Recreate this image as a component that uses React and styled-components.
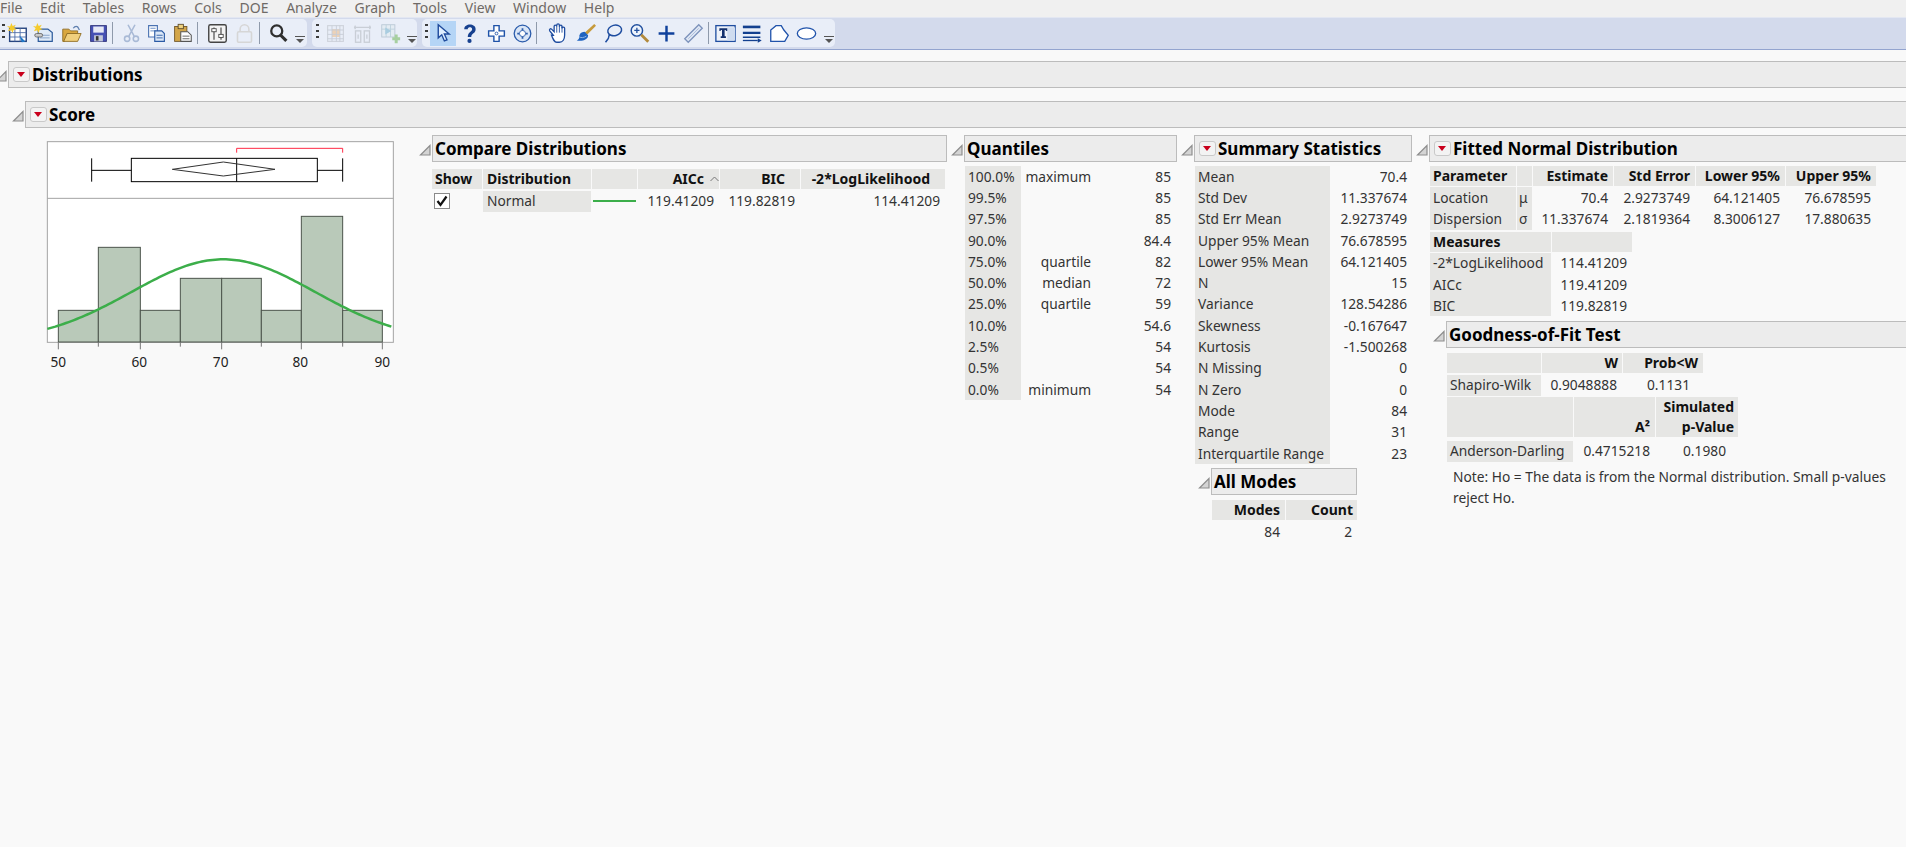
import React from 'react'
import styled, { createGlobalStyle } from 'styled-components'

const GlobalStyle = createGlobalStyle`
  html, body { margin: 0; padding: 0; background: #f9f9f9; }
  body { font-family: "Noto Sans", "Open Sans", sans-serif; overflow: hidden; }
`

const Page = styled.div`
  width: 1906px;
  height: 847px;
  overflow: hidden;
  background: #f9f9f9;
  color: #2b2b2b;
  font-size: 13.75px;
`

/* menu + toolbar */
const MenuBar = styled.div`
  display: flex;
  height: 17px;
  background: #f0f0f0;
  gap: 17.7px;
  font-size: 14px;
  line-height: 15px;
  color: #6f6a66;
`
const ToolBand = styled.div`
  display: flex;
  height: 33px;
  box-sizing: border-box;
  padding: 1px 0 2px;
  gap: 5px;
  background: #d3daec;
  border-top: 1px solid #e3e7f2;
  border-bottom: 1px solid #93a4cf;
`
const ToolGroup = styled.div`
  display: flex;
  align-items: center;
  width: ${p => p.$w}px;
  box-sizing: border-box;
  padding-left: ${p => p.$pad || 0}px;
  background: #e9eef8;
  border-radius: ${p => (p.$first ? '0 5px 5px 0' : '5px')};
`
const Gripper = styled.span`
  width: 3px;
  height: 18px;
  margin-right: ${p => p.$after || 0}px;
  background: repeating-linear-gradient(#3b3b3b 0 2px, transparent 2px 6px);
`
const ToolBtn = styled.span`
  display: flex;
  flex: none;
  align-items: center;
  justify-content: center;
  width: ${p => p.$w || 27}px;
  height: 25px;
  background: ${p => (p.$active ? '#b5d5f6' : 'transparent')};
  svg { width: 21px; height: 21px; display: block; }
`
const ToolSep = styled.span`
  flex: none;
  width: 1px;
  height: 22px;
  margin: 0 ${p => p.$r || 5}px 0 1px;
  background: #8f9aab;
`
const Overflow = styled.span`
  flex: none;
  width: 10px;
  height: 8px;
  margin: 14px 0 0 ${p => p.$l || 0}px;
  border-top: 1px solid #555;
  position: relative;
  &::after {
    content: '';
    position: absolute;
    left: 1px;
    top: 2px;
    border: 4px solid transparent;
    border-top: 4px solid #555;
    border-bottom: 0;
  }
`

/* outline heads */
const Head = styled.div`
  display: flex;
  align-items: center;
  margin: ${p => p.$margin || '0'};
`
const Tri = styled.svg`
  flex: none;
  width: 12px;
  height: 12px;
  margin: 2px 1px 0 ${p => p.$left || 0}px;
`
const Bar = styled.div`
  flex: ${p => (p.$w ? 'none' : '1')};
  width: ${p => (p.$w ? `${p.$w}px` : 'auto')};
  display: flex;
  align-items: center;
  box-sizing: border-box;
  height: 27px;
  padding-left: ${p => (p.$btn ? 4 : 2)}px;
  background: #ececec;
  border: 1px solid #bcbcbc;
  border-right-width: ${p => (p.$open ? 0 : 1)}px;
  color: #000;
  font-size: 17px;
  font-weight: 700;
  white-space: nowrap;
`
const RedBtn = styled.span`
  flex: none;
  position: relative;
  width: 17px;
  height: 15px;
  margin-right: 2px;
  box-sizing: border-box;
  background: #f3f3f3;
  border: 1px solid #c9c9c9;
  border-radius: 3px;
  &::after {
    content: '';
    position: absolute;
    left: 3px;
    top: 4px;
    border: 4.5px solid transparent;
    border-top: 5px solid #c9001c;
    border-bottom: 0;
  }
`

const Outline = ({ title, btn, w, open, left, margin }) => (
  <Head $margin={margin}>
    <Tri viewBox="0 0 12 12" $left={left}>
      <path d="M11 1.5V11H1.5Z" fill="#d4d4d4" stroke="#8e8e8e" strokeWidth="1.2" />
    </Tri>
    <Bar $w={w} $btn={btn} $open={open}>
      {btn && <RedBtn />}
      {title}
    </Bar>
  </Head>
)

/* tables */
const Grid = styled.div`
  display: grid;
  grid-template-columns: ${p => p.$cols};
  grid-auto-rows: ${p => p.$row || 21.3}px;
  column-gap: ${p => (p.$gap === undefined ? 1 : p.$gap)}px;
  margin: ${p => p.$margin || '0'};
  width: max-content;
  white-space: nowrap;
`
const Cell = styled.div`
  display: flex;
  align-items: center;
  justify-content: ${p => (p.$right ? 'flex-end' : p.$center ? 'center' : 'flex-start')};
  padding: ${p => (p.$right ? `0 ${p.$pad === undefined ? 3 : p.$pad}px 0 0` : `0 0 0 ${p.$pad === undefined ? 3 : p.$pad}px`)};
  background: ${p => (p.$shade ? '#e6e6e4' : 'transparent')};
  font-weight: ${p => (p.$head ? 700 : 400)};
  font-size: ${p => (p.$head ? 14 : 13.75)}px;
  color: ${p => (p.$head ? '#111' : '#333')};
  line-height: 20px;
`
const HeadCell = styled(Cell).attrs({ $head: true, $shade: true })`
  height: 20px;
`
const TallCell = styled(HeadCell)`
  height: 40px;
  text-align: right;
  align-items: flex-end;
`
const Caret = styled.svg`
  width: 9px;
  height: 6px;
  margin-left: 6px;
`
const Check = styled.span`
  display: flex;
  align-items: center;
  justify-content: center;
  width: 16px;
  height: 16px;
  box-sizing: border-box;
  background: #fff;
  border: 1px solid #8a8a8a;
`
const Fit = styled.span`
  display: block;
  width: 43px;
  height: 2px;
  background: #3cae4a;
`

/* panels */
const Body = styled.div`
  display: flex;
  margin-left: 30px;
`
const PlotSvg = styled.svg`
  flex: none;
  width: 380px;
  height: 250px;
  margin-top: 2px;
`
const Panel = styled.div`
  flex: none;
  width: ${p => p.$w}px;
  margin: 7px 0 0 ${p => p.$ml}px;
`
const Inner = styled.div`
  padding-left: ${p => p.$left}px;
`
const Note = styled.p`
  margin: 4px 0 0 ${p => p.$left}px;
  line-height: 21px;
  color: #333;
`

/* toolbar drawings, 24 box */
const I = {
  newTable: <svg viewBox="0 0 24 24"><rect x="3" y="6" width="19" height="15" fill="#fff" stroke="#27457f" strokeWidth="1.6"/><path d="M3 11h19M3 16h19M9 6v15M15 6v15" stroke="#4d6ca8"/><path d="M14 14l7 7-4 1z" fill="#1f78c8"/><path d="M5 0l1.500 3.500L10 2 8 5.500 11 7 7.500 8 6.500 11.500 4.800 8.300 1 9.500 3 6 0 3.500l3.500.5z" fill="#f5cb2e"/></svg>,
  newScript: <svg viewBox="0 0 24 24"><path d="M6 7h11l5 4v10H6z" fill="#dfeaf7" stroke="#2c5a9c" strokeWidth="1.4"/><path d="M8 14h11M8 17h11" stroke="#7f9cc5"/><rect x="2" y="12" width="9" height="4" rx="2" fill="#c9c9c9" stroke="#666"/><path d="M5 0l1.500 3.500L10 2 8 5.500 11 7 7.500 8 6.500 11.500 4.800 8.300 1 9.500 3 6 0 3.500l3.500.5z" fill="#f5cb2e"/></svg>,
  open: <svg viewBox="0 0 24 24"><path d="M2 7h7l2 2h8v3H7l-3 9H2z" fill="#d9a73f" stroke="#8d6a22"/><path d="M7 12h16l-4 9H3z" fill="#f0cf7d" stroke="#8d6a22"/><path d="M14 6c2-3 5-3 6 0l1 2" fill="none" stroke="#5f7fae" strokeWidth="1.5"/></svg>,
  save: <svg viewBox="0 0 24 24"><rect x="3" y="3" width="18" height="18" fill="#4650b4" stroke="#2a2f77"/><rect x="6" y="4" width="12" height="7" fill="#e6e8f5"/><rect x="7" y="14" width="10" height="7" fill="#c4c8d8"/><rect x="9" y="15" width="3" height="5" fill="#333"/></svg>,
  cut: <svg viewBox="0 0 24 24" fill="none" stroke="#a9bad6" strokeWidth="1.8"><path d="M8 2l7 13M16 2L9 15"/><circle cx="7" cy="18" r="3"/><circle cx="17" cy="18" r="3"/></svg>,
  copy: <svg viewBox="0 0 24 24"><path d="M3 3h10v13H3z" fill="#fff" stroke="#4b73b3" strokeWidth="1.3"/><path d="M5 6h6M5 9h6" stroke="#5a82c0"/><path d="M10 9h8l3 3v9H10z" fill="#dce8f7" stroke="#2a5aa5" strokeWidth="1.3"/><path d="M12 14h7M12 17h7" stroke="#2a5aa5"/></svg>,
  paste: <svg viewBox="0 0 24 24"><rect x="3" y="4" width="14" height="17" fill="#d3a64a" stroke="#6e5425"/><rect x="7" y="1.5" width="6" height="5" fill="#efd27f" stroke="#5b4a2a"/><path d="M10 10h8l4 4v7H10z" fill="#fff" stroke="#555" strokeWidth="1.2"/><path d="M12 15h8M12 18h8" stroke="#555"/></svg>,
  panel: <svg viewBox="0 0 24 24" fill="none"><rect x="2" y="2" width="20" height="20" rx="2" fill="#f3f3f3" stroke="#444" strokeWidth="1.6"/><path d="M8 5v14M16 5v14" stroke="#444" strokeWidth="1.3"/><rect x="5.5" y="6.5" width="5" height="3.5" fill="#fff" stroke="#444"/><rect x="13.5" y="13" width="5" height="3.5" fill="#fff" stroke="#444"/></svg>,
  lock: <svg viewBox="0 0 24 24" fill="none" stroke="#d6d6d6" strokeWidth="1.8"><rect x="4" y="10" width="16" height="12" rx="1.5"/><path d="M7 10V7a5 5 0 0110 0v3"/></svg>,
  search: <svg viewBox="0 0 24 24" fill="none" stroke="#2f2f2f"><circle cx="10" cy="9" r="6.3" strokeWidth="2.6"/><path d="M14.5 14l6.5 6.5" strokeWidth="3.6"/></svg>,
  dimTable: <svg viewBox="0 0 24 24" fill="none"><rect x="3" y="3" width="18" height="18" stroke="#cfd3dc" strokeWidth="1.3"/><rect x="8" y="7" width="9" height="9" fill="#ecd2b8"/><path d="M3 8h18M3 13h18M3 18h18M8 3v18M13 3v18M17 3v18" stroke="#c6cbd6"/></svg>,
  dimBars: <svg viewBox="0 0 24 24" fill="none" stroke="#c9ced6" strokeWidth="1.5"><rect x="4" y="9" width="6" height="13"/><rect x="14" y="9" width="6" height="13"/><path d="M7 13v5M17 13v5M3 5h18"/><path d="M4 3l-1 2 1 2M20 3l1 2-1 2"/></svg>,
  dimAdd: <svg viewBox="0 0 24 24"><rect x="2" y="2" width="15" height="14" fill="#e4ecf3" stroke="#b9c7d4"/><path d="M2 7h15M7 2v14M12 2v14" stroke="#bcd0dc"/><path d="M6 5l7 4-7 4z" fill="#a9cde0"/><path d="M14 18h9M18.500 13v10" stroke="#a7cfa0" strokeWidth="3.4"/></svg>,
  arrow: <svg viewBox="0 0 24 24"><path d="M6 2v15l4-3.500 3 7 3-1.300-3-6.700h5.500z" fill="#dfeeff" stroke="#1e4a9c" strokeWidth="1.6"/></svg>,
  help: <svg viewBox="0 0 24 24"><path d="M6 7c0-7 13-7 13 0 0 5-5 4.500-5 9h-4c0-6 5-6 5-9 0-3-5-3-5 0z" fill="#17418f"/><circle cx="12" cy="20.500" r="2.400" fill="#17418f"/></svg>,
  cross: <svg viewBox="0 0 24 24"><path d="M9 3h6v6h6v6h-6v6H9v-6H3V9h6z" fill="#fff" stroke="#1e52a8" strokeWidth="1.600"/><circle cx="12" cy="12" r="1.600" fill="none" stroke="#1e52a8"/></svg>,
  target: <svg viewBox="0 0 24 24" fill="none" stroke="#2b5cab"><circle cx="12" cy="12" r="9.500" fill="#d9e5f6" strokeWidth="1.500"/><path d="M12 6v12M6 12h12" strokeWidth="2"/><circle cx="12" cy="12" r="3.500" fill="#fff"/></svg>,
  hand: <svg viewBox="0 0 24 24"><path d="M6 14L2 9c-1-2 1-3 2-2l3 3V4c0-2 2.500-2 3 0V2.500c0-2 3-2 3 0V4c.5-2 3-2 3 0v2c.5-2 3-1.500 3 0v8c0 4-2 8-6 8h-3c-3 0-4-3-6-8z" fill="#fff" stroke="#1f4da0" strokeWidth="1.500"/><path d="M10 4v7M13 3v8M16 4v7" stroke="#1f4da0"/></svg>,
  brush: <svg viewBox="0 0 24 24"><path d="M22 1l2 2-10 10-3-2z" fill="#c69a3c"/><path d="M11 10l4 4c0 5-6 7-13 6 3-1 3-4 3-6 1-3 4-4 6-4z" fill="#1f63c0"/><path d="M5 16c2 1 5 1 8-1" stroke="#9cc0ec" fill="none"/></svg>,
  lasso: <svg viewBox="0 0 24 24" fill="none" stroke="#1e4da0" strokeWidth="1.700"><ellipse cx="14.500" cy="8.500" rx="8" ry="6" transform="rotate(-15 14.500 8.500)"/><path d="M9 13c-2 2-1 4-2 5l-3 4"/></svg>,
  zoom: <svg viewBox="0 0 24 24" fill="none"><circle cx="9" cy="8.500" r="6.500" fill="#eef4fc" stroke="#22509f" strokeWidth="1.700"/><path d="M6 8.500h6M9 5.500v6" stroke="#22509f" strokeWidth="1.500"/><path d="M14 13.500l8 8" stroke="#b28a3c" strokeWidth="3.200"/></svg>,
  plus: <svg viewBox="0 0 24 24"><path d="M12 3v18M3 12h18" stroke="#10419c" strokeWidth="2.800"/></svg>,
  ruler: <svg viewBox="0 0 24 24"><path d="M2 18L18 2l4 4L6 22z" fill="#dfe7f5" stroke="#7c92bb" strokeWidth="1.500"/><path d="M6 18L18 6" stroke="#a8b9d8"/></svg>,
  text: <svg viewBox="0 0 24 24"><rect x="1" y="3" width="22" height="18" fill="#eef2f9" stroke="#1f4da0" strokeWidth="1.500"/><path d="M14 5h9v15h-9" fill="#cfdcf0"/><path d="M5 6h9v3h-1l-1-1h-1v7h1.500v2h-6v-2H8V8H7L6 9H5z" fill="#13306e"/></svg>,
  lines: <svg viewBox="0 0 24 24"><path d="M1 3h20v3H1z" fill="#13408f"/><path d="M1 10h20v2.500H1zM1 15.500h20v1.500H1z" fill="#13408f"/><path d="M1 20h17" stroke="#13408f" strokeWidth="1.500"/><path d="M18 17.500l4.500 2.500-4.500 2.500z" fill="#13408f"/></svg>,
  poly: <svg viewBox="0 0 24 24"><path d="M2 21V8l6-5h6l3 5 5 6-4 7z" fill="#fff" stroke="#2053ab" strokeWidth="1.500"/></svg>,
  oval: <svg viewBox="0 0 24 24"><ellipse cx="12" cy="12" rx="10.500" ry="6.500" fill="#fff" stroke="#2053ab" strokeWidth="1.500"/></svg>,
}

const menus = ['File', 'Edit', 'Tables', 'Rows', 'Cols', 'DOE', 'Analyze', 'Graph', 'Tools', 'View', 'Window', 'Help']

/* histogram, coordinates are pixels*3 */
const bins = [[85, 205, 541], [205, 331, 352], [331, 451, 541], [451, 575, 445], [575, 694, 445], [694, 814, 541], [814, 938, 259], [938, 1057, 541]]
const normalPath = () => {
  const pts = []
  for (let x = 52; x <= 1090; x += 8) {
    const z = (x - 580) / 275
    pts.push(`${x},${(636 - 248 * Math.exp(-0.5 * z * z)).toFixed(1)}`)
  }
  return 'M' + pts.join('L')
}

const Plot = () => (
  <PlotSvg viewBox="0 0 1140 750">
    <rect x="52" y="35" width="1038" height="602" fill="#fff" stroke="#a3a3a3" strokeWidth="3" />
    <path d="M52 205H1090" stroke="#a3a3a3" strokeWidth="3" />
    {bins.map(([a, b, top]) => (
      <rect key={a} x={a} y={top} width={b - a} height={636 - top} fill="#b9c9b9" stroke="#4c544c" strokeWidth="3" />
    ))}
    <path d={normalPath()} fill="none" stroke="#3cae4a" strokeWidth="7.5" />
    <path d="M620 68V55H938V68" fill="none" stroke="#ff2a45" strokeWidth="3" />
    <g fill="none" stroke="#000" strokeWidth="3">
      <path d="M185 85V155M185 121H304M862 121H938M938 85V155M620 85V155" />
      <rect x="304" y="85" width="558" height="70" />
    </g>
    <path d="M427 118L580 96 735 118 580 138Z" fill="none" stroke="#333" strokeWidth="3" />
    <path d="M85 637V658M331 637V658M575 637V658M814 637V658M1057 637V658M205 637V650M451 637V650M694 637V650M938 637V650" stroke="#777" strokeWidth="3" />
    {[[85, 50], [328, 60], [572, 70], [811, 80], [1057, 90]].map(([x, t]) => (
      <text key={t} x={x} y="712" textAnchor="middle" fontSize="41" fill="#222" fontFamily="Noto Sans, sans-serif">{t}</text>
    ))}
  </PlotSvg>
)

const quantiles = [
  ['100.0%', 'maximum', '85'], ['99.5%', '', '85'], ['97.5%', '', '85'], ['90.0%', '', '84.4'],
  ['75.0%', 'quartile', '82'], ['50.0%', 'median', '72'], ['25.0%', 'quartile', '59'], ['10.0%', '', '54.6'],
  ['2.5%', '', '54'], ['0.5%', '', '54'], ['0.0%', 'minimum', '54'],
]
const stats = [
  ['Mean', '70.4'], ['Std Dev', '11.337674'], ['Std Err Mean', '2.9273749'], ['Upper 95% Mean', '76.678595'],
  ['Lower 95% Mean', '64.121405'], ['N', '15'], ['Variance', '128.54286'], ['Skewness', '-0.167647'],
  ['Kurtosis', '-1.500268'], ['N Missing', '0'], ['N Zero', '0'], ['Mode', '84'], ['Range', '31'],
  ['Interquartile Range', '23'],
]
const params = [
  ['Location', 'μ', '70.4', '2.9273749', '64.121405', '76.678595'],
  ['Dispersion', 'σ', '11.337674', '2.1819364', '8.3006127', '17.880635'],
]
const measures = [['-2*LogLikelihood', '114.41209'], ['AICc', '119.41209'], ['BIC', '119.82819']]

export default function App() {
  return (
    <Page>
      <GlobalStyle />
      <MenuBar>
        {menus.map(m => <span key={m}>{m}</span>)}
      </MenuBar>
      <ToolBand>
        <ToolGroup $w={307} $first $pad={2}>
          <Gripper />
          <ToolBtn $w={25}>{I.newTable}</ToolBtn>
          <ToolBtn>{I.newScript}</ToolBtn>
          <ToolBtn $w={28}>{I.open}</ToolBtn>
          <ToolBtn $w={26}>{I.save}</ToolBtn>
          <ToolSep />
          <ToolBtn $w={26}>{I.cut}</ToolBtn>
          <ToolBtn $w={25}>{I.copy}</ToolBtn>
          <ToolBtn>{I.paste}</ToolBtn>
          <ToolSep />
          <ToolBtn $w={28}>{I.panel}</ToolBtn>
          <ToolBtn>{I.lock}</ToolBtn>
          <ToolSep />
          <ToolBtn>{I.search}</ToolBtn>
          <Overflow $l={3} />
        </ToolGroup>
        <ToolGroup $w={105} $pad={4}>
          <Gripper $after={3} />
          <ToolBtn>{I.dimTable}</ToolBtn>
          <ToolBtn>{I.dimBars}</ToolBtn>
          <ToolBtn $w={28}>{I.dimAdd}</ToolBtn>
          <Overflow $l={3} />
        </ToolGroup>
        <ToolGroup $w={413} $pad={3}>
          <Gripper $after={2} />
          <ToolBtn $w={26} $active>{I.arrow}</ToolBtn>
          <ToolBtn>{I.help}</ToolBtn>
          <ToolBtn $w={26}>{I.cross}</ToolBtn>
          <ToolBtn $w={26}>{I.target}</ToolBtn>
          <ToolSep $r={8} />
          <ToolBtn>{I.hand}</ToolBtn>
          <ToolBtn $w={27}>{I.brush}</ToolBtn>
          <ToolBtn>{I.lasso}</ToolBtn>
          <ToolBtn>{I.zoom}</ToolBtn>
          <ToolBtn>{I.plus}</ToolBtn>
          <ToolBtn>{I.ruler}</ToolBtn>
          <ToolSep $r={3} />
          <ToolBtn>{I.text}</ToolBtn>
          <ToolBtn>{I.lines}</ToolBtn>
          <ToolBtn>{I.poly}</ToolBtn>
          <ToolBtn>{I.oval}</ToolBtn>
          <Overflow $l={4} />
        </ToolGroup>
      </ToolBand>

      <Outline title="Distributions" btn open left={-5} margin="11px 0 0" />
      <Outline title="Score" btn open left={12} margin="13px 0 0" />

      <Body>
        <Plot />

        <Panel $w={527} $ml={9}>
          <Outline title="Compare Distributions" w={515} />
          <Grid $cols="50px 108px 45px 81px 80px 144px" $margin="7px 0 0 13px" $row={21.5}>
            <HeadCell>Show</HeadCell>
            <HeadCell $pad={4}>Distribution</HeadCell>
            <HeadCell />
            <HeadCell $right $pad={0}>
              AICc
              <Caret viewBox="0 0 9 6"><path d="M.5 5L4.500 1l4 4" fill="none" stroke="#777" /></Caret>
            </HeadCell>
            <HeadCell $right $pad={15}>BIC</HeadCell>
            <HeadCell $right $pad={15}>-2*LogLikelihood</HeadCell>
            <Cell $pad={2}>
              <Check>
                <svg width="12" height="12" viewBox="0 0 12 12"><path d="M1.500 6l3 4L10.500 1.500" fill="none" stroke="#111" strokeWidth="2.200" /></svg>
              </Check>
            </Cell>
            <Cell $shade $pad={4}>Normal</Cell>
            <Cell $center $pad={0}><Fit /></Cell>
            <Cell $right $pad={5}>119.41209</Cell>
            <Cell $right $pad={5}>119.82819</Cell>
            <Cell $right $pad={5}>114.41209</Cell>
          </Grid>
        </Panel>

        <Panel $w={225} $ml={5}>
          <Outline title="Quantiles" w={213} />
          <Grid $cols="56px 70px 81px" $gap={0} $margin="4px 0 0 14px">
            {quantiles.map(([a, b, c]) => (
              <React.Fragment key={a}>
                <Cell $shade>{a}</Cell>
                <Cell $right $pad={0}>{b}</Cell>
                <Cell $right $pad={1}>{c}</Cell>
              </React.Fragment>
            ))}
          </Grid>
        </Panel>

        <Panel $w={230} $ml={5}>
          <Outline title="Summary Statistics" btn w={218} />
          <Grid $cols="135px 77px" $gap={0} $margin="4px 0 0 14px">
            {stats.map(([a, b]) => (
              <React.Fragment key={a}>
                <Cell $shade>{a}</Cell>
                <Cell $right $pad={0}>{b}</Cell>
              </React.Fragment>
            ))}
          </Grid>
          <Outline title="All Modes" w={146} left={17} margin="4px 0 0" />
          <Grid $cols="73px 71px" $margin="5px 0 0 31px">
            <HeadCell $right $pad={5}>Modes</HeadCell>
            <HeadCell $right $pad={4}>Count</HeadCell>
            <Cell $right $pad={5}>84</Cell>
            <Cell $right $pad={5}>2</Cell>
          </Grid>
        </Panel>

        <Panel $w={490} $ml={5}>
          <Outline title="Fitted Normal Distribution" btn open />
          <Inner $left={14}>
            <Grid $cols="86px 15px 80px 81px 89px 90px" $margin="4px 0 0" $row={21.2}>
              <HeadCell>Parameter</HeadCell>
              <HeadCell />
              {['Estimate', 'Std Error', 'Lower 95%', 'Upper 95%'].map(h => <HeadCell key={h} $right $pad={5}>{h}</HeadCell>)}
              {params.map(([a, b, ...vals]) => (
                <React.Fragment key={a}>
                  <Cell $shade>{a}</Cell>
                  <Cell $shade $pad={2}>{b}</Cell>
                  {vals.map(v => <Cell key={v} $right $pad={5}>{v}</Cell>)}
                </React.Fragment>
              ))}
            </Grid>
            <Grid $cols="121px 80px" $margin="2px 0 0" $row={21.2}>
              <HeadCell>Measures</HeadCell>
              <HeadCell />
              {measures.map(([a, b]) => (
                <React.Fragment key={a}>
                  <Cell $shade>{a}</Cell>
                  <Cell $right $pad={5}>{b}</Cell>
                </React.Fragment>
              ))}
            </Grid>
          </Inner>
          <Outline title="Goodness-of-Fit Test" open left={17} margin="5px 0 0" />
          <Inner $left={31}>
            <Grid $cols="94px 80px 80px" $margin="5px 0 0" $row={21.2}>
              <HeadCell />
              <HeadCell $right $pad={4}>W</HeadCell>
              <HeadCell $right $pad={5}>Prob&lt;W</HeadCell>
              <Cell $shade>Shapiro-Wilk</Cell>
              <Cell $right $pad={5}>0.9048888</Cell>
              <Cell $right $pad={13}>0.1131</Cell>
            </Grid>
            <Grid $cols="126px 81px 82px" $margin="1px 0 0" $row={41}>
              <TallCell />
              <TallCell $right $pad={5}>A²</TallCell>
              <TallCell $right $pad={4}>Simulated<br />p-Value</TallCell>
            </Grid>
            <Grid $cols="126px 81px 82px" $margin="3px 0 0" $row={21.2}>
              <Cell $shade>Anderson-Darling</Cell>
              <Cell $right $pad={5}>0.4715218</Cell>
              <Cell $right $pad={12}>0.1980</Cell>
            </Grid>
            <Note $left={6}>Note: Ho = The data is from the Normal distribution. Small p-values<br />reject Ho.</Note>
          </Inner>
        </Panel>
      </Body>
    </Page>
  )
}
